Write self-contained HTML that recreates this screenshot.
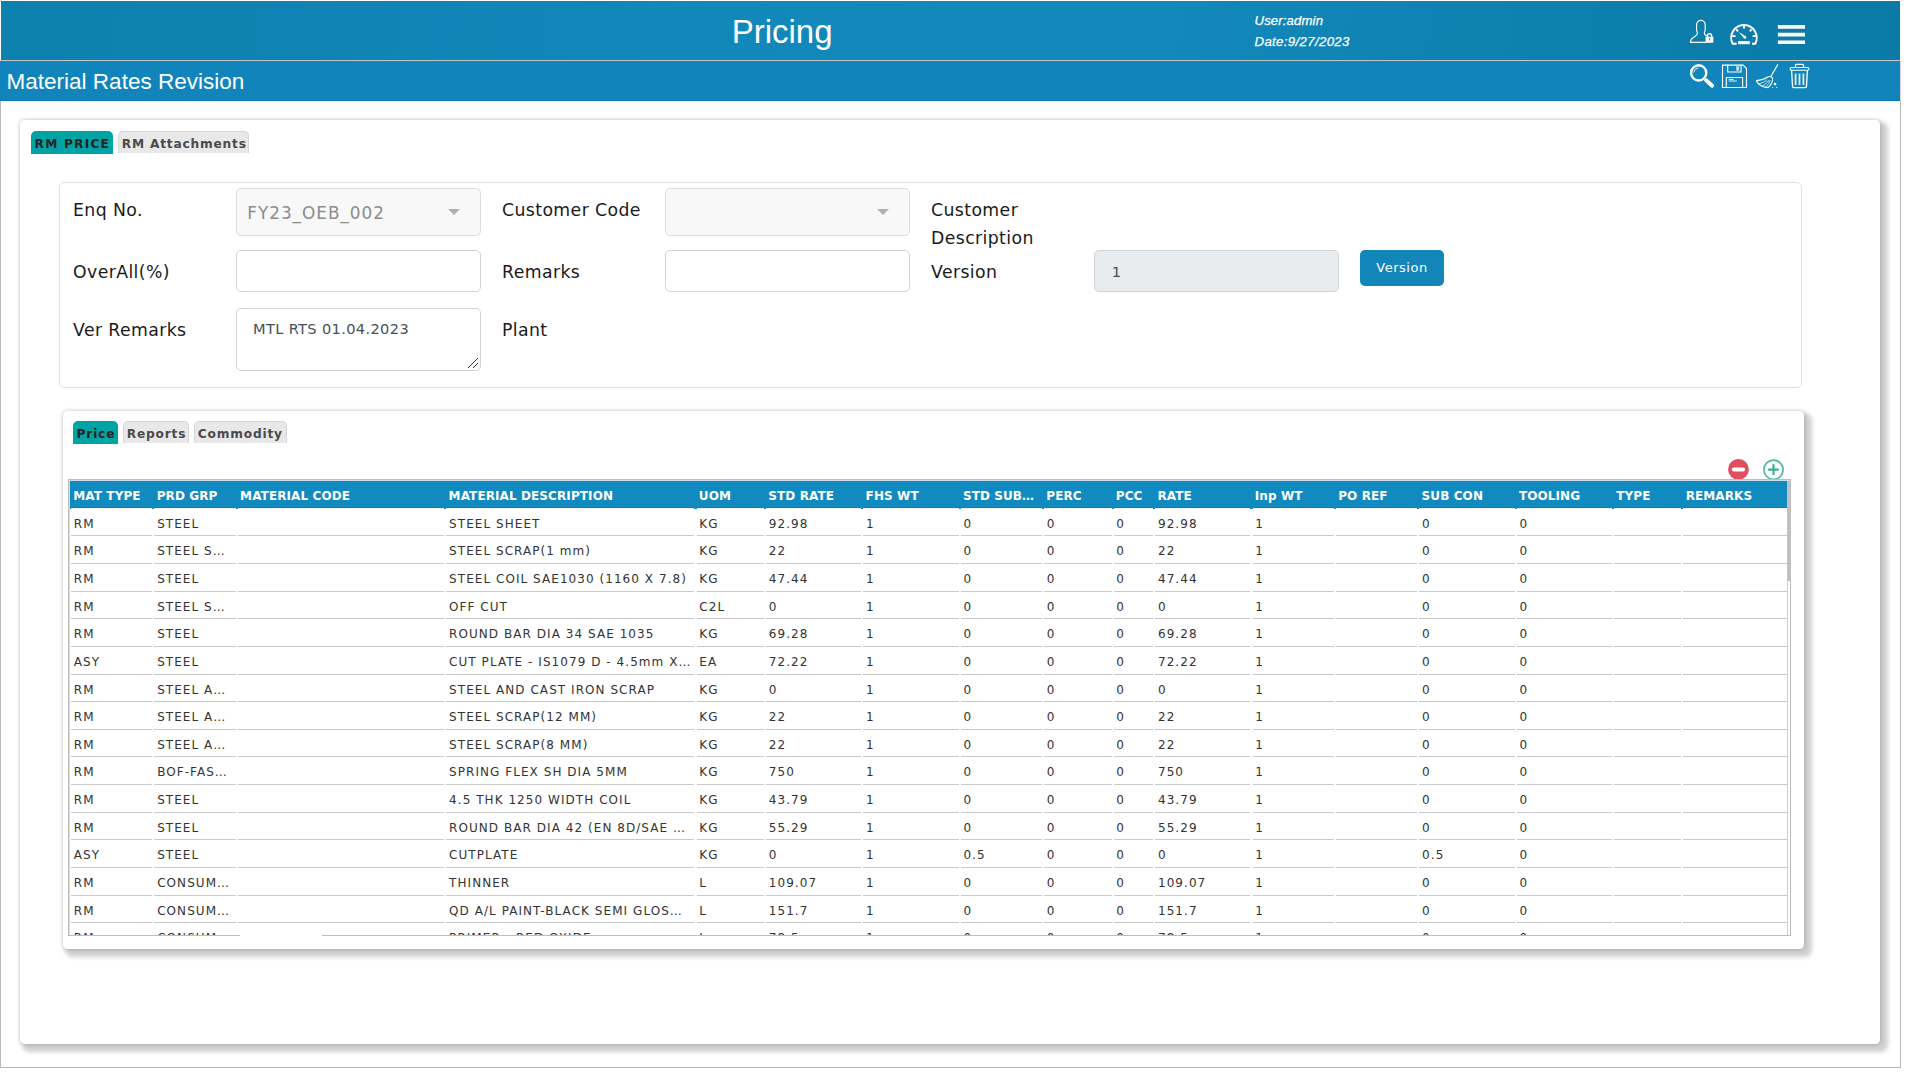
<!DOCTYPE html>
<html lang="en"><head><meta charset="utf-8"><title>Pricing - Material Rates Revision</title>
<style>
html,body{margin:0;padding:0;background:#fff}
body{width:1920px;height:1080px;position:relative;overflow:hidden;font-family:"DejaVu Sans","Liberation Sans",sans-serif;color:#212529}
div,span{box-sizing:border-box}
.a{position:absolute}
#frame{left:0;top:101px;width:1901px;height:967px;border:1px solid #b9b9b9;border-top:0}
#hdr{left:1px;top:1px;width:1899px;height:59px;background:linear-gradient(100deg,#0e80ae 0%,#1287ba 35%,#1388bb 60%,#0a7aa6 100%)}
#hline{left:0;top:60px;width:1901px;height:1px;background:#c4c8ca}
#sub{left:0;top:61px;width:1900px;height:40px;background:#1185bb;border-bottom:1px solid #0277b4}
#title{left:731.7px;top:12px;font:33px/40px "Liberation Sans",sans-serif;color:#fff;white-space:nowrap}
#user{-webkit-text-stroke:.25px #fff;left:1254.5px;top:10.8px;font:italic 13.2px/20.8px "Liberation Sans",sans-serif;color:#fff;white-space:nowrap}
#page{left:6.6px;top:67.6px;font:22.5px/28px "Liberation Sans",sans-serif;letter-spacing:0px;color:#fff;white-space:nowrap}
.card{background:#fff;border-radius:4.5px;box-shadow:5px 5px 4px 3px rgba(0,0,0,.19),0 0 4px rgba(0,0,0,.24)}
#card1{left:20.4px;top:119.6px;width:1859.8px;height:924.3px}
#card2{left:62.5px;top:410.6px;width:1741.6px;height:538.3px}
.tab{height:23px;font-weight:bold;font-size:12.2px;letter-spacing:.8px;line-height:26px;padding-left:3.6px;text-align:left;white-space:nowrap;border-radius:5px 5px 0 0}
.tab.on{background:#00a3a3;color:#222}
.tab.off{background:#e8e8e8;color:#4a4a4a;border:1px solid #d6d6d6;border-bottom:0;height:22px;padding-left:2.8px;line-height:24px}
#panel{left:59px;top:182px;width:1743px;height:206px;border:1px solid #dee2e6;border-radius:5px}
.lbl{font-size:17.3px;letter-spacing:.4px;line-height:27.6px;color:#1a1a1a;white-space:nowrap}
.inp{border:1px solid #ced4da;border-radius:5px;background:#fff;width:245px}
.sel{background:#f8f8f8;border-color:#dcdcdc}
.sel span{position:absolute;left:10.3px;top:10.2px;font-size:16.9px;letter-spacing:.95px;line-height:28px;color:#8c8c8c;white-space:nowrap}
.arr{position:absolute;left:211px;top:20px;width:0;height:0;border-left:6px solid transparent;border-right:6px solid transparent;border-top:6px solid #b0b0b0}
.txt{font-size:14.6px;letter-spacing:.35px;line-height:22px;color:#495057;white-space:nowrap}
#btn{left:1360px;top:250px;width:84px;height:36px;border-radius:5px;background:#1285b9;color:#fff;font-size:13px;letter-spacing:.5px;line-height:36px;text-align:center}
#grid{left:68px;top:479px;width:1723px;height:457px;border:1px solid #bdbdbd;overflow:hidden;background:#fff;box-shadow:inset 1px 1px 0 #cfdcec}
#gin{left:1px;top:1px;width:1717px;height:455px;overflow:hidden;background:#fff}
.thead{position:absolute;left:0;top:0;width:1717px;height:28px;background:#118abf}
.th{position:absolute;top:0;height:28px;padding-left:2.3px;font-weight:bold;font-size:12px;letter-spacing:.1px;line-height:31px;color:#fff;white-space:nowrap;overflow:hidden;border-bottom:1px solid #f4eeee;box-shadow:inset 0 -1px 0 #0581bb}
.tr{position:absolute;left:0;width:1717px}
.td{position:absolute;top:0;height:100%;padding-left:2.8px;font-size:12px;letter-spacing:1.05px;line-height:31px;color:#333;white-space:nowrap;overflow:hidden;border-bottom:1px solid #c8c8c8}
</style></head>
<body>
<div id="frame" class="a"></div>
<div id="hdr" class="a"></div>
<div id="hline" class="a"></div>
<div id="sub" class="a"></div>
<div class="a" style="left:1900px;top:61px;width:1px;height:40px;background:#ddd5d3"></div>
<div id="title" class="a">Pricing</div>
<div id="user" class="a"><span style="letter-spacing:.12px">User:admin</span><br><span style="letter-spacing:.36px">Date:9/27/2023</span></div>
<div id="page" class="a">Material Rates Revision</div>

<svg class="a" style="left:1680px;top:10px" width="140" height="90" viewBox="1680 10 140 90" fill="none" stroke="#fff" stroke-linecap="round" stroke-linejoin="round">
<!-- user + lock -->
<path d="M1705.5 42.400H1690.400C1690.400 39.600 1691.800 38.200 1694.200 36.900C1696.200 35.800 1697.400 35.200 1697.400 33.600V32.400C1697.400 31.600 1696.600 31.200 1696.600 30V24.700A4.300 4.400 0 0 1 1705.200 24.700V30C1705.200 31.200 1704.400 31.600 1704.400 32.400V33.600C1704.400 34.600 1705.200 35.200 1706.400 35.800" stroke-width="1.15"/>
<path d="M1707.400 37v-1.100a2.100 2.100 0 0 1 4.200 0v1.100" stroke-width="1.400"/>
<rect x="1705.600" y="36.800" width="7.700" height="6" rx=".5" fill="#fff" stroke="none"/>
<path d="M1708.800 38.600h1.600l-.8 2.300z" fill="#0d7dab" stroke="none"/>
<!-- gauge -->
<path d="M1736.700 43.700H1732.670A12.750 12.750 0 1 1 1755.230 43.700H1752" stroke-width="1.900" stroke-linecap="butt" stroke-linejoin="miter"/>
<path d="M1744 26v2.600M1736.300 29.500l1.800 1.800M1751.600 29.500l-1.800 1.800" stroke-width="2" stroke-linecap="butt"/>
<path d="M1732 36.100h3.600M1756 36.100h-3.400" stroke-width="1.600" stroke-linecap="butt"/>
<path d="M1738.600 31.800L1745.900 36.600L1744.100 38.400z" fill="#fff" stroke="none"/>
<circle cx="1745" cy="37.500" r="1.300" fill="#fff" stroke="none"/>
<rect x="1738.100" y="41.100" width="11.700" height="3.100" fill="#fff" stroke="none"/>
<!-- hamburger -->
<path d="M1777.900 26.900h27.100M1777.900 34.600h27.100M1777.900 42.200h27.100" stroke-width="3.600" stroke-linecap="butt"/>
<!-- search -->
<circle cx="1698.700" cy="72.900" r="7.600" stroke-width="2.400"/>
<path d="M1693.700 72.200a5 5 0 0 1 4.300-4.300" stroke-width=".9"/>
<path d="M1706.100 80.200l6.100 5.500" stroke-width="3.900"/>
<!-- save -->
<path d="M1722.500 65.100h20.600l3.400 3.400v19h-24z" stroke-width="1.100" stroke-linejoin="miter"/>
<path d="M1727.700 65.100v6.900h13.400v-6.900" stroke-width="1.100" stroke-linejoin="miter"/>
<rect x="1736.200" y="66.200" width="3" height="4.500" fill="#fff" fill-opacity=".75" stroke="none"/>
<path d="M1726.300 87.500v-10h16.300v10" stroke-width="1.100" stroke-linejoin="miter"/>
<path d="M1728.600 79.400h5M1728.600 81h8.300" stroke-width=".9" stroke-linecap="butt"/>
<!-- broom -->
<path d="M1777.600 64.700l-6.700 11.800" stroke-width="1.200"/>
<path d="M1772.700 78.100c-1.200-1.300-3-2-4.400-1.300-2.600 1.700-6.600 3.500-12 3.800 1.700 3.600 6.100 6.900 11.800 7 2.900-2.300 4.500-5.900 4.600-9.500z" stroke-width="1.100"/>
<path d="M1759.500 83.600c2.800-.5 5.300-1.800 7.300-3.700M1762.600 86c2.500-1.300 4.600-3.300 6.100-5.600M1765.700 87.200c1.800-1.900 3.400-3.900 4.400-6.500" stroke-width=".7"/>
<circle cx="1775" cy="84.100" r="1.300" fill="#fff" stroke="none"/><circle cx="1772.400" cy="87.600" r=".55" fill="#fff" stroke="none"/><circle cx="1776.700" cy="87.400" r=".55" fill="#fff" stroke="none"/>
<!-- trash -->
<path d="M1795.500 67.400v-2.100c0-.5.400-.9.900-.9h6.200c.5 0 .9.400.9.900v2.100" stroke-width="1.200"/>
<rect x="1790.100" y="67.500" width="18.800" height="2.700" rx="1.200" stroke-width="1.100"/>
<path d="M1791.600 70.400l.9 15.700c.1.900.8 1.600 1.700 1.600h10.600c.9 0 1.600-.7 1.700-1.600l.9-15.700" stroke-width="1.300"/>
<path d="M1795.600 73.400v11.600M1799.500 73.400v11.600M1803.400 73.400v11.600" stroke-width="1.800" stroke-linecap="butt" stroke-opacity=".85"/>
</svg>


<div id="card1" class="a card"></div>
<div class="a tab on" style="left:31px;top:131px;width:82px;letter-spacing:1.2px">RM PRICE</div>
<div class="a tab off" style="left:118px;top:131px;width:131px">RM Attachments</div>

<div id="panel" class="a"></div>
<div class="a lbl" style="left:73px;top:197px">Enq No.</div>
<div class="a lbl" style="left:502px;top:197px">Customer Code</div>
<div class="a lbl" style="left:931px;top:197px">Customer<br>Description</div>
<div class="a lbl" style="left:73px;top:259px">OverAll(%)</div>
<div class="a lbl" style="left:502px;top:259px">Remarks</div>
<div class="a lbl" style="left:931px;top:259px">Version</div>
<div class="a lbl" style="left:73px;top:317px">Ver Remarks</div>
<div class="a lbl" style="left:502px;top:317px">Plant</div>

<div class="a inp sel" style="left:236px;top:188px;height:48px"><span>FY23_OEB_002</span><i class="arr"></i></div>
<div class="a inp sel" style="left:665px;top:188px;height:48px"><i class="arr"></i></div>
<div class="a inp" style="left:236px;top:250px;height:42px"></div>
<div class="a inp" style="left:665px;top:250px;height:42px"></div>
<div class="a inp" style="left:1094px;top:250px;height:42px;background:#e9ecef"><span class="a txt" style="left:16.8px;top:9.6px">1</span></div>
<div id="btn" class="a">Version</div>
<div class="a inp" style="left:236px;top:308px;height:63px"><span class="a txt" style="left:16px;top:9px">MTL RTS 01.04.2023</span>
<svg class="a" style="right:1px;bottom:1px" width="12" height="12" viewBox="0 0 12 12"><path d="M1 11L11 1M6 11L11 6" stroke="#333" stroke-width="1" fill="none"/></svg></div>

<div id="card2" class="a card"></div>
<div class="a tab on" style="left:73px;top:421px;width:45px">Price</div>
<div class="a tab off" style="left:123px;top:421px;width:66px">Reports</div>
<div class="a tab off" style="left:194px;top:421px;width:93px">Commodity</div>

<svg class="a" style="left:1726px;top:457px" width="62" height="24" viewBox="0 0 62 24">
<circle cx="12.5" cy="12.4" r="10.4" fill="#e04f5f"/><rect x="5.9" y="10.4" width="13.2" height="4.2" rx="2.1" fill="#fff"/>
<circle cx="47.5" cy="12.7" r="9.6" fill="#fff" stroke="#4db6a0" stroke-width="1.6"/><path d="M43 12.7h9M47.5 8.2v9" stroke="#3fae93" stroke-width="2.2" stroke-linecap="round"/>
</svg>

<div id="grid" class="a"><div id="gin" class="a">
<div class="thead"><div class="th" style="left:1px;width:81.4px">MAT TYPE</div><div class="th" style="left:84.4px;width:81.4px">PRD GRP</div><div class="th" style="left:167.8px;width:206.5px">MATERIAL CODE</div><div class="th" style="left:376.3px;width:248.2px">MATERIAL DESCRIPTION</div><div class="th" style="left:626.5px;width:67.5px">UOM</div><div class="th" style="left:696.0px;width:95.29999999999995px">STD RATE</div><div class="th" style="left:793.3px;width:95.30000000000007px">FHS WT</div><div class="th" style="left:890.6px;width:81.39999999999998px">STD SUB…</div><div class="th" style="left:974.0px;width:67.5px">PERC</div><div class="th" style="left:1043.5px;width:39.700000000000045px">PCC</div><div class="th" style="left:1085.2px;width:95.29999999999995px">RATE</div><div class="th" style="left:1182.5px;width:81.40000000000009px">Inp WT</div><div class="th" style="left:1265.9px;width:81.39999999999986px">PO REF</div><div class="th" style="left:1349.3px;width:95.29999999999995px">SUB CON</div><div class="th" style="left:1446.6px;width:95.30000000000018px">TOOLING</div><div class="th" style="left:1543.9px;width:67.5px">TYPE</div><div class="th" style="left:1613.4px;width:104.59999999999991px">REMARKS</div></div>
<div class="tr" style="top:28px;height:27px"><div class="td" style="left:1px;width:81.4px">RM</div><div class="td" style="left:84.4px;width:81.4px">STEEL</div><div class="td" style="left:167.8px;width:206.5px"></div><div class="td" style="left:376.3px;width:248.2px">STEEL SHEET</div><div class="td" style="left:626.5px;width:67.5px">KG</div><div class="td" style="left:696.0px;width:95.29999999999995px">92.98</div><div class="td" style="left:793.3px;width:95.30000000000007px">1</div><div class="td" style="left:890.6px;width:81.39999999999998px">0</div><div class="td" style="left:974.0px;width:67.5px">0</div><div class="td" style="left:1043.5px;width:39.700000000000045px">0</div><div class="td" style="left:1085.2px;width:95.29999999999995px">92.98</div><div class="td" style="left:1182.5px;width:81.40000000000009px">1</div><div class="td" style="left:1265.9px;width:81.39999999999986px"></div><div class="td" style="left:1349.3px;width:95.29999999999995px">0</div><div class="td" style="left:1446.6px;width:95.30000000000018px">0</div><div class="td" style="left:1543.9px;width:67.5px"></div><div class="td" style="left:1613.4px;width:104.59999999999991px"></div></div>
<div class="tr" style="top:55px;height:28px"><div class="td" style="left:1px;width:81.4px">RM</div><div class="td" style="left:84.4px;width:81.4px">STEEL S…</div><div class="td" style="left:167.8px;width:206.5px"></div><div class="td" style="left:376.3px;width:248.2px">STEEL SCRAP(1 mm)</div><div class="td" style="left:626.5px;width:67.5px">KG</div><div class="td" style="left:696.0px;width:95.29999999999995px">22</div><div class="td" style="left:793.3px;width:95.30000000000007px">1</div><div class="td" style="left:890.6px;width:81.39999999999998px">0</div><div class="td" style="left:974.0px;width:67.5px">0</div><div class="td" style="left:1043.5px;width:39.700000000000045px">0</div><div class="td" style="left:1085.2px;width:95.29999999999995px">22</div><div class="td" style="left:1182.5px;width:81.40000000000009px">1</div><div class="td" style="left:1265.9px;width:81.39999999999986px"></div><div class="td" style="left:1349.3px;width:95.29999999999995px">0</div><div class="td" style="left:1446.6px;width:95.30000000000018px">0</div><div class="td" style="left:1543.9px;width:67.5px"></div><div class="td" style="left:1613.4px;width:104.59999999999991px"></div></div>
<div class="tr" style="top:83px;height:28px"><div class="td" style="left:1px;width:81.4px">RM</div><div class="td" style="left:84.4px;width:81.4px">STEEL</div><div class="td" style="left:167.8px;width:206.5px"></div><div class="td" style="left:376.3px;width:248.2px">STEEL COIL SAE1030 (1160 X 7.8)</div><div class="td" style="left:626.5px;width:67.5px">KG</div><div class="td" style="left:696.0px;width:95.29999999999995px">47.44</div><div class="td" style="left:793.3px;width:95.30000000000007px">1</div><div class="td" style="left:890.6px;width:81.39999999999998px">0</div><div class="td" style="left:974.0px;width:67.5px">0</div><div class="td" style="left:1043.5px;width:39.700000000000045px">0</div><div class="td" style="left:1085.2px;width:95.29999999999995px">47.44</div><div class="td" style="left:1182.5px;width:81.40000000000009px">1</div><div class="td" style="left:1265.9px;width:81.39999999999986px"></div><div class="td" style="left:1349.3px;width:95.29999999999995px">0</div><div class="td" style="left:1446.6px;width:95.30000000000018px">0</div><div class="td" style="left:1543.9px;width:67.5px"></div><div class="td" style="left:1613.4px;width:104.59999999999991px"></div></div>
<div class="tr" style="top:111px;height:27px"><div class="td" style="left:1px;width:81.4px">RM</div><div class="td" style="left:84.4px;width:81.4px">STEEL S…</div><div class="td" style="left:167.8px;width:206.5px"></div><div class="td" style="left:376.3px;width:248.2px">OFF CUT</div><div class="td" style="left:626.5px;width:67.5px">C2L</div><div class="td" style="left:696.0px;width:95.29999999999995px">0</div><div class="td" style="left:793.3px;width:95.30000000000007px">1</div><div class="td" style="left:890.6px;width:81.39999999999998px">0</div><div class="td" style="left:974.0px;width:67.5px">0</div><div class="td" style="left:1043.5px;width:39.700000000000045px">0</div><div class="td" style="left:1085.2px;width:95.29999999999995px">0</div><div class="td" style="left:1182.5px;width:81.40000000000009px">1</div><div class="td" style="left:1265.9px;width:81.39999999999986px"></div><div class="td" style="left:1349.3px;width:95.29999999999995px">0</div><div class="td" style="left:1446.6px;width:95.30000000000018px">0</div><div class="td" style="left:1543.9px;width:67.5px"></div><div class="td" style="left:1613.4px;width:104.59999999999991px"></div></div>
<div class="tr" style="top:138px;height:28px"><div class="td" style="left:1px;width:81.4px">RM</div><div class="td" style="left:84.4px;width:81.4px">STEEL</div><div class="td" style="left:167.8px;width:206.5px"></div><div class="td" style="left:376.3px;width:248.2px">ROUND BAR DIA 34 SAE 1035</div><div class="td" style="left:626.5px;width:67.5px">KG</div><div class="td" style="left:696.0px;width:95.29999999999995px">69.28</div><div class="td" style="left:793.3px;width:95.30000000000007px">1</div><div class="td" style="left:890.6px;width:81.39999999999998px">0</div><div class="td" style="left:974.0px;width:67.5px">0</div><div class="td" style="left:1043.5px;width:39.700000000000045px">0</div><div class="td" style="left:1085.2px;width:95.29999999999995px">69.28</div><div class="td" style="left:1182.5px;width:81.40000000000009px">1</div><div class="td" style="left:1265.9px;width:81.39999999999986px"></div><div class="td" style="left:1349.3px;width:95.29999999999995px">0</div><div class="td" style="left:1446.6px;width:95.30000000000018px">0</div><div class="td" style="left:1543.9px;width:67.5px"></div><div class="td" style="left:1613.4px;width:104.59999999999991px"></div></div>
<div class="tr" style="top:166px;height:28px"><div class="td" style="left:1px;width:81.4px">ASY</div><div class="td" style="left:84.4px;width:81.4px">STEEL</div><div class="td" style="left:167.8px;width:206.5px"></div><div class="td" style="left:376.3px;width:248.2px">CUT PLATE - IS1079 D - 4.5mm X…</div><div class="td" style="left:626.5px;width:67.5px">EA</div><div class="td" style="left:696.0px;width:95.29999999999995px">72.22</div><div class="td" style="left:793.3px;width:95.30000000000007px">1</div><div class="td" style="left:890.6px;width:81.39999999999998px">0</div><div class="td" style="left:974.0px;width:67.5px">0</div><div class="td" style="left:1043.5px;width:39.700000000000045px">0</div><div class="td" style="left:1085.2px;width:95.29999999999995px">72.22</div><div class="td" style="left:1182.5px;width:81.40000000000009px">1</div><div class="td" style="left:1265.9px;width:81.39999999999986px"></div><div class="td" style="left:1349.3px;width:95.29999999999995px">0</div><div class="td" style="left:1446.6px;width:95.30000000000018px">0</div><div class="td" style="left:1543.9px;width:67.5px"></div><div class="td" style="left:1613.4px;width:104.59999999999991px"></div></div>
<div class="tr" style="top:194px;height:27px"><div class="td" style="left:1px;width:81.4px">RM</div><div class="td" style="left:84.4px;width:81.4px">STEEL A…</div><div class="td" style="left:167.8px;width:206.5px"></div><div class="td" style="left:376.3px;width:248.2px">STEEL AND CAST IRON SCRAP</div><div class="td" style="left:626.5px;width:67.5px">KG</div><div class="td" style="left:696.0px;width:95.29999999999995px">0</div><div class="td" style="left:793.3px;width:95.30000000000007px">1</div><div class="td" style="left:890.6px;width:81.39999999999998px">0</div><div class="td" style="left:974.0px;width:67.5px">0</div><div class="td" style="left:1043.5px;width:39.700000000000045px">0</div><div class="td" style="left:1085.2px;width:95.29999999999995px">0</div><div class="td" style="left:1182.5px;width:81.40000000000009px">1</div><div class="td" style="left:1265.9px;width:81.39999999999986px"></div><div class="td" style="left:1349.3px;width:95.29999999999995px">0</div><div class="td" style="left:1446.6px;width:95.30000000000018px">0</div><div class="td" style="left:1543.9px;width:67.5px"></div><div class="td" style="left:1613.4px;width:104.59999999999991px"></div></div>
<div class="tr" style="top:221px;height:28px"><div class="td" style="left:1px;width:81.4px">RM</div><div class="td" style="left:84.4px;width:81.4px">STEEL A…</div><div class="td" style="left:167.8px;width:206.5px"></div><div class="td" style="left:376.3px;width:248.2px">STEEL SCRAP(12 MM)</div><div class="td" style="left:626.5px;width:67.5px">KG</div><div class="td" style="left:696.0px;width:95.29999999999995px">22</div><div class="td" style="left:793.3px;width:95.30000000000007px">1</div><div class="td" style="left:890.6px;width:81.39999999999998px">0</div><div class="td" style="left:974.0px;width:67.5px">0</div><div class="td" style="left:1043.5px;width:39.700000000000045px">0</div><div class="td" style="left:1085.2px;width:95.29999999999995px">22</div><div class="td" style="left:1182.5px;width:81.40000000000009px">1</div><div class="td" style="left:1265.9px;width:81.39999999999986px"></div><div class="td" style="left:1349.3px;width:95.29999999999995px">0</div><div class="td" style="left:1446.6px;width:95.30000000000018px">0</div><div class="td" style="left:1543.9px;width:67.5px"></div><div class="td" style="left:1613.4px;width:104.59999999999991px"></div></div>
<div class="tr" style="top:249px;height:27px"><div class="td" style="left:1px;width:81.4px">RM</div><div class="td" style="left:84.4px;width:81.4px">STEEL A…</div><div class="td" style="left:167.8px;width:206.5px"></div><div class="td" style="left:376.3px;width:248.2px">STEEL SCRAP(8 MM)</div><div class="td" style="left:626.5px;width:67.5px">KG</div><div class="td" style="left:696.0px;width:95.29999999999995px">22</div><div class="td" style="left:793.3px;width:95.30000000000007px">1</div><div class="td" style="left:890.6px;width:81.39999999999998px">0</div><div class="td" style="left:974.0px;width:67.5px">0</div><div class="td" style="left:1043.5px;width:39.700000000000045px">0</div><div class="td" style="left:1085.2px;width:95.29999999999995px">22</div><div class="td" style="left:1182.5px;width:81.40000000000009px">1</div><div class="td" style="left:1265.9px;width:81.39999999999986px"></div><div class="td" style="left:1349.3px;width:95.29999999999995px">0</div><div class="td" style="left:1446.6px;width:95.30000000000018px">0</div><div class="td" style="left:1543.9px;width:67.5px"></div><div class="td" style="left:1613.4px;width:104.59999999999991px"></div></div>
<div class="tr" style="top:276px;height:28px"><div class="td" style="left:1px;width:81.4px">RM</div><div class="td" style="left:84.4px;width:81.4px">BOF-FAS…</div><div class="td" style="left:167.8px;width:206.5px"></div><div class="td" style="left:376.3px;width:248.2px">SPRING FLEX SH DIA 5MM</div><div class="td" style="left:626.5px;width:67.5px">KG</div><div class="td" style="left:696.0px;width:95.29999999999995px">750</div><div class="td" style="left:793.3px;width:95.30000000000007px">1</div><div class="td" style="left:890.6px;width:81.39999999999998px">0</div><div class="td" style="left:974.0px;width:67.5px">0</div><div class="td" style="left:1043.5px;width:39.700000000000045px">0</div><div class="td" style="left:1085.2px;width:95.29999999999995px">750</div><div class="td" style="left:1182.5px;width:81.40000000000009px">1</div><div class="td" style="left:1265.9px;width:81.39999999999986px"></div><div class="td" style="left:1349.3px;width:95.29999999999995px">0</div><div class="td" style="left:1446.6px;width:95.30000000000018px">0</div><div class="td" style="left:1543.9px;width:67.5px"></div><div class="td" style="left:1613.4px;width:104.59999999999991px"></div></div>
<div class="tr" style="top:304px;height:28px"><div class="td" style="left:1px;width:81.4px">RM</div><div class="td" style="left:84.4px;width:81.4px">STEEL</div><div class="td" style="left:167.8px;width:206.5px"></div><div class="td" style="left:376.3px;width:248.2px">4.5 THK 1250 WIDTH COIL</div><div class="td" style="left:626.5px;width:67.5px">KG</div><div class="td" style="left:696.0px;width:95.29999999999995px">43.79</div><div class="td" style="left:793.3px;width:95.30000000000007px">1</div><div class="td" style="left:890.6px;width:81.39999999999998px">0</div><div class="td" style="left:974.0px;width:67.5px">0</div><div class="td" style="left:1043.5px;width:39.700000000000045px">0</div><div class="td" style="left:1085.2px;width:95.29999999999995px">43.79</div><div class="td" style="left:1182.5px;width:81.40000000000009px">1</div><div class="td" style="left:1265.9px;width:81.39999999999986px"></div><div class="td" style="left:1349.3px;width:95.29999999999995px">0</div><div class="td" style="left:1446.6px;width:95.30000000000018px">0</div><div class="td" style="left:1543.9px;width:67.5px"></div><div class="td" style="left:1613.4px;width:104.59999999999991px"></div></div>
<div class="tr" style="top:332px;height:27px"><div class="td" style="left:1px;width:81.4px">RM</div><div class="td" style="left:84.4px;width:81.4px">STEEL</div><div class="td" style="left:167.8px;width:206.5px"></div><div class="td" style="left:376.3px;width:248.2px">ROUND BAR DIA 42 (EN 8D/SAE …</div><div class="td" style="left:626.5px;width:67.5px">KG</div><div class="td" style="left:696.0px;width:95.29999999999995px">55.29</div><div class="td" style="left:793.3px;width:95.30000000000007px">1</div><div class="td" style="left:890.6px;width:81.39999999999998px">0</div><div class="td" style="left:974.0px;width:67.5px">0</div><div class="td" style="left:1043.5px;width:39.700000000000045px">0</div><div class="td" style="left:1085.2px;width:95.29999999999995px">55.29</div><div class="td" style="left:1182.5px;width:81.40000000000009px">1</div><div class="td" style="left:1265.9px;width:81.39999999999986px"></div><div class="td" style="left:1349.3px;width:95.29999999999995px">0</div><div class="td" style="left:1446.6px;width:95.30000000000018px">0</div><div class="td" style="left:1543.9px;width:67.5px"></div><div class="td" style="left:1613.4px;width:104.59999999999991px"></div></div>
<div class="tr" style="top:359px;height:28px"><div class="td" style="left:1px;width:81.4px">ASY</div><div class="td" style="left:84.4px;width:81.4px">STEEL</div><div class="td" style="left:167.8px;width:206.5px"></div><div class="td" style="left:376.3px;width:248.2px">CUTPLATE</div><div class="td" style="left:626.5px;width:67.5px">KG</div><div class="td" style="left:696.0px;width:95.29999999999995px">0</div><div class="td" style="left:793.3px;width:95.30000000000007px">1</div><div class="td" style="left:890.6px;width:81.39999999999998px">0.5</div><div class="td" style="left:974.0px;width:67.5px">0</div><div class="td" style="left:1043.5px;width:39.700000000000045px">0</div><div class="td" style="left:1085.2px;width:95.29999999999995px">0</div><div class="td" style="left:1182.5px;width:81.40000000000009px">1</div><div class="td" style="left:1265.9px;width:81.39999999999986px"></div><div class="td" style="left:1349.3px;width:95.29999999999995px">0.5</div><div class="td" style="left:1446.6px;width:95.30000000000018px">0</div><div class="td" style="left:1543.9px;width:67.5px"></div><div class="td" style="left:1613.4px;width:104.59999999999991px"></div></div>
<div class="tr" style="top:387px;height:28px"><div class="td" style="left:1px;width:81.4px">RM</div><div class="td" style="left:84.4px;width:81.4px">CONSUM…</div><div class="td" style="left:167.8px;width:206.5px"></div><div class="td" style="left:376.3px;width:248.2px">THINNER</div><div class="td" style="left:626.5px;width:67.5px">L</div><div class="td" style="left:696.0px;width:95.29999999999995px">109.07</div><div class="td" style="left:793.3px;width:95.30000000000007px">1</div><div class="td" style="left:890.6px;width:81.39999999999998px">0</div><div class="td" style="left:974.0px;width:67.5px">0</div><div class="td" style="left:1043.5px;width:39.700000000000045px">0</div><div class="td" style="left:1085.2px;width:95.29999999999995px">109.07</div><div class="td" style="left:1182.5px;width:81.40000000000009px">1</div><div class="td" style="left:1265.9px;width:81.39999999999986px"></div><div class="td" style="left:1349.3px;width:95.29999999999995px">0</div><div class="td" style="left:1446.6px;width:95.30000000000018px">0</div><div class="td" style="left:1543.9px;width:67.5px"></div><div class="td" style="left:1613.4px;width:104.59999999999991px"></div></div>
<div class="tr" style="top:415px;height:27px"><div class="td" style="left:1px;width:81.4px">RM</div><div class="td" style="left:84.4px;width:81.4px">CONSUM…</div><div class="td" style="left:167.8px;width:206.5px"></div><div class="td" style="left:376.3px;width:248.2px">QD A/L PAINT-BLACK SEMI GLOS…</div><div class="td" style="left:626.5px;width:67.5px">L</div><div class="td" style="left:696.0px;width:95.29999999999995px">151.7</div><div class="td" style="left:793.3px;width:95.30000000000007px">1</div><div class="td" style="left:890.6px;width:81.39999999999998px">0</div><div class="td" style="left:974.0px;width:67.5px">0</div><div class="td" style="left:1043.5px;width:39.700000000000045px">0</div><div class="td" style="left:1085.2px;width:95.29999999999995px">151.7</div><div class="td" style="left:1182.5px;width:81.40000000000009px">1</div><div class="td" style="left:1265.9px;width:81.39999999999986px"></div><div class="td" style="left:1349.3px;width:95.29999999999995px">0</div><div class="td" style="left:1446.6px;width:95.30000000000018px">0</div><div class="td" style="left:1543.9px;width:67.5px"></div><div class="td" style="left:1613.4px;width:104.59999999999991px"></div></div>
<div class="tr" style="top:442px;height:28px"><div class="td" style="left:1px;width:81.4px">RM</div><div class="td" style="left:84.4px;width:81.4px">CONSUM…</div><div class="td" style="left:167.8px;width:206.5px"></div><div class="td" style="left:376.3px;width:248.2px">PRIMER - RED OXIDE</div><div class="td" style="left:626.5px;width:67.5px">L</div><div class="td" style="left:696.0px;width:95.29999999999995px">78.5</div><div class="td" style="left:793.3px;width:95.30000000000007px">1</div><div class="td" style="left:890.6px;width:81.39999999999998px">0</div><div class="td" style="left:974.0px;width:67.5px">0</div><div class="td" style="left:1043.5px;width:39.700000000000045px">0</div><div class="td" style="left:1085.2px;width:95.29999999999995px">78.5</div><div class="td" style="left:1182.5px;width:81.40000000000009px">1</div><div class="td" style="left:1265.9px;width:81.39999999999986px"></div><div class="td" style="left:1349.3px;width:95.29999999999995px">0</div><div class="td" style="left:1446.6px;width:95.30000000000018px">0</div><div class="td" style="left:1543.9px;width:67.5px"></div><div class="td" style="left:1613.4px;width:104.59999999999991px"></div></div>
</div>
<div class="a" style="left:1718px;top:1px;width:3px;height:100px;background:#c1c1c1"></div>
<div class="a" style="left:1718px;top:101px;width:3px;height:355px;border-left:1px solid #c3d3e4;background:#fff"></div>
</div>
<div class="a" style="left:240px;top:935px;width:82px;height:1px;background:#fff"></div>
</body></html>
